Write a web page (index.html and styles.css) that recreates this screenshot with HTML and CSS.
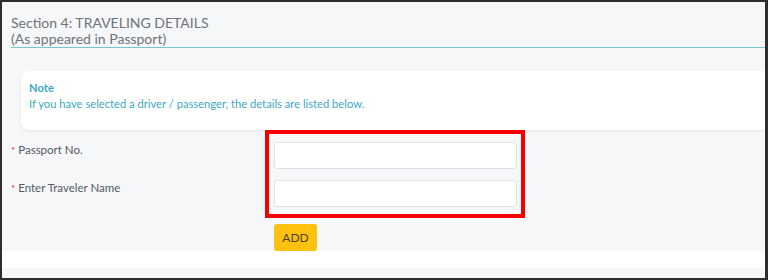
FILE: index.html
```html
<!DOCTYPE html>
<html lang="en">

<head>
    <meta charset="UTF-8">
    <title>Traveling Details</title>
    <link rel="stylesheet" href="styles.css">
</head>

<body>
    <div class="kuang">
        <div class="section">
            <!-- 标题 -->
            <div class="biaoti">
                <div>Section 4: TRAVELING DETAILS</div>
                <div>(As appeared in Passport)</div>
            </div>
            <!-- 提示 -->
            <div class="note">
                <div class="note-t">Note</div>
                <div class="note-c">If you have selected a driver / passenger, the details are listed below.</div>
            </div>
            <!-- 表单 -->
            <div class="form">
                <div class="row">
                    <label><span class="xing">*</span> Passport No.</label>
                    <input type="text">
                </div>
                <div class="row">
                    <label><span class="xing">*</span> Enter Traveler Name</label>
                    <input type="text">
                </div>
                <div class="row anniu">
                    <label></label>
                    <button>ADD</button>
                </div>
                <!-- 红框 -->
                <div class="hongkuang"></div>
            </div>
        </div>
        <div class="baitiao"></div>
    </div>
</body>

</html>
```

FILE: styles.css
```css
* {
    margin: 0;
    padding: 0;
    box-sizing: border-box;
}

body {
    font-family: Lato, "Open Sans", sans-serif;
    background-color: #fff;
}

.kuang {
    width: 768px;
    height: 280px;
    border: 2px solid #2e2e2e;
    border-right-width: 3px;
    background-color: #f6f7f9;
}

.section {
    height: 249px;
    background-color: #f6f7f9;
    padding-top: 13px;
}

.biaoti {
    margin-left: 9px;
    font-size: 14px;
    line-height: 16px;
    color: #6f7378;
    border-bottom: 1px solid #79c3d3;
}

.note {
    margin: 23px 0 0 19px;
    height: 59px;
    background-color: #fff;
    border-radius: 8px 0 0 8px;
    box-shadow: 0 1px 3px rgba(0, 0, 0, 0.08);
    padding: 9px 0 0 8px;
    color: #3ea8c3;
    font-size: 11.2px;
    line-height: 16px;
}

.note-t {
    font-weight: bold;
}

.form {
    position: relative;
    margin-top: 12px;
    display: flex;
    flex-direction: column;
    gap: 11px;
}

.row {
    display: flex;
}

.row label {
    width: 272px;
    padding: 1px 0 0 9px;
    font-size: 11.5px;
    color: #555a60;
}

.xing {
    color: #e03030;
    font-size: 10px;
}

.row input {
    width: 243px;
    height: 27px;
    border: 1px solid #dfe2e6;
    border-radius: 3px;
    background-color: #fff;
}

.anniu {
    margin-top: 6px;
}

.row button {
    width: 43px;
    height: 27px;
    border: none;
    border-radius: 3px;
    background-color: #fdc20f;
    color: #4e430f;
    font-family: Lato, sans-serif;
    font-size: 12px;
}

.hongkuang {
    position: absolute;
    left: 263px;
    top: -12px;
    width: 260px;
    height: 88px;
    border: 4px solid #f40000;
}

.baitiao {
    height: 17px;
    background-color: #fff;
}
```
